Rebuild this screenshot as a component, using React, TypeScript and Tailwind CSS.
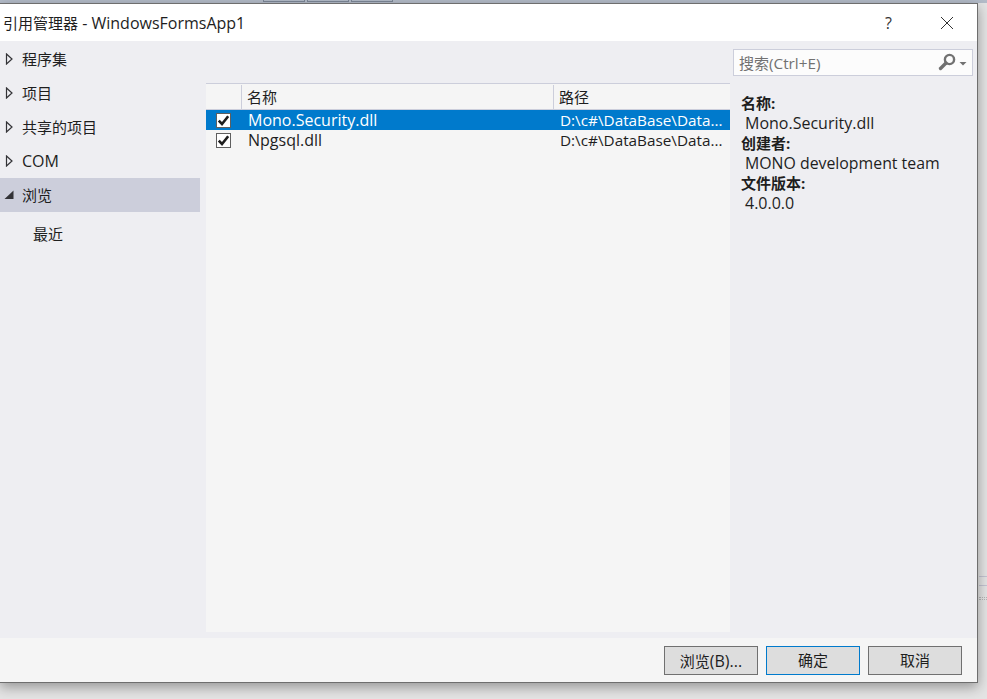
const F = "font-['Segoe_UI','Open_Sans','Noto_Sans','Noto_Sans_CJK_SC',sans-serif]";

function Tri({ open }: { open?: boolean }) {
  return open ? (
    <svg width="10" height="10" viewBox="0 0 10 10" className="shrink-0">
      <path d="M0.5 9 L9.5 9 L9.5 0.5 Z" fill="#333337" />
    </svg>
  ) : (
    <svg width="10" height="12" viewBox="0 0 10 12" className="shrink-0">
      <path d="M2.5 1 L8 6 L2.5 11 Z" fill="#eeeef2" stroke="#333337" strokeWidth="1.2" />
    </svg>
  );
}

function NavItem({ label, open }: { label: string; open?: boolean }) {
  return (
    <div className={`h-[34px] w-[200px] flex items-center pl-[4px] gap-[8px] text-[15px] text-[#1e1e1e] ${open ? "bg-[#cccedb]" : ""}`}>
      <Tri open={open} />
      <span>{label}</span>
    </div>
  );
}

function Check() {
  return (
    <span className="w-[15px] h-[15px] border border-[#5f5f5f] bg-white flex items-center justify-center shrink-0">
      <svg width="13" height="13" viewBox="0 0 13 13">
        <path d="M1.8 6.6 L5 10 L11.2 2.2" fill="none" stroke="#1e1e1e" strokeWidth="2.6" />
      </svg>
    </span>
  );
}

function Row({ name, selected }: { name: string; selected?: boolean }) {
  return (
    <div className={`h-[20px] flex items-center ${selected ? "bg-[#007acc] text-white" : "text-[#1e1e1e]"}`}>
      <div className="w-[35px] flex justify-end pr-[10px] shrink-0"><Check /></div>
      <div className="w-[313px] pl-[7px] shrink-0 text-[16px]">{name}</div>
      <div className="pl-[6px] whitespace-nowrap text-[15.3px]">D:\c#\DataBase\Data...</div>
    </div>
  );
}

function Btn({ label, latin, primary }: { label: string; latin?: string; primary?: boolean }) {
  return (
    <button className={`w-[94px] h-[29px] bg-[#dddddd] border text-[15px] text-[#1e1e1e] ${primary ? "border-[#007acc]" : "border-[#707070]"}`}>
      {label}
      {latin && <span className="text-[16px]">{latin}</span>}
    </button>
  );
}

export default function App() {
  return (
    <div className={`${F} w-[987px] h-[699px] bg-[#e4e4e4] overflow-hidden relative`}>
      <div className="absolute left-[979px] right-0 top-[576px] h-[1px] bg-[#c3c4d2]" />
      <div className="absolute left-[979px] right-0 top-[585px] h-[1px] bg-[#c3c4d2]" />
      <div className="absolute left-[979px] right-0 top-[597px] h-[3px] border-y border-dotted border-[#b5b5b5]" />
      <div className="h-[3px] bg-[#b4bcc9] flex gap-[2px] pl-[263px] shrink-0">
        <div className="w-[42px] h-[2px] border-b border-x border-[#7d8798]" />
        <div className="w-[42px] h-[2px] border-b border-x border-[#7d8798]" />
        <div className="w-[42px] h-[2px] border-b border-x border-[#7d8798]" />
      </div>
      <div className="relative w-[978px] h-[680px] border border-[#6e6e6e] border-l-0 bg-[#eeeef2] flex flex-col shadow-[0_4px_12px_rgba(0,0,0,0.35)]">
        <div className="h-[37px] bg-white flex items-center shrink-0">
          <span className="pl-[3px] text-[15px] text-[#1e1e1e] flex-1">
            引用管理器<span className="text-[16px]"> - WindowsFormsApp1</span>
          </span>
          <span className="text-[16px] text-[#333] mr-[48px]">?</span>
          <svg width="14" height="14" viewBox="0 0 14 14" className="mr-[23px]">
            <path d="M1 1 L13 13 M13 1 L1 13" stroke="#333" strokeWidth="1" />
          </svg>
        </div>
        <div className="flex-1 flex min-h-0">
          <div className="w-[206px] shrink-0 pt-[1px]">
            <NavItem label="程序集" />
            <NavItem label="项目" />
            <NavItem label="共享的项目" />
            <div className="h-[34px] w-[200px] flex items-center pl-[4px] gap-[8px] text-[16px] text-[#1e1e1e]">
              <Tri />
              <span>COM</span>
            </div>
            <NavItem label="浏览" open />
            <div className="pl-[33px] h-[44px] flex items-center text-[15px] text-[#1e1e1e]">最近</div>
          </div>
          <div className="w-[524px] shrink-0 pt-[42px] pb-[7px]">
            <div className="h-full bg-[#f5f5f5] flex flex-col">
              <div className="h-[27px] pt-[1px] flex text-[15px] text-[#1e1e1e] border-t border-b border-[#cccedb]">
                <div className="w-[36px] border-r border-[#cccedb]" />
                <div className="w-[312px] pl-[5px] border-r border-[#cccedb] flex items-center">名称</div>
                <div className="pl-[5px] flex items-center">路径</div>
              </div>
              <Row name="Mono.Security.dll" selected />
              <Row name="Npgsql.dll" />
            </div>
          </div>
          <div className="flex-1 pl-[3px] pr-[4px]">
            <div className="mt-[8px] h-[27px] w-[240px] bg-[#fcfcfc] border border-[#cccedb] flex items-center pl-[5px] text-[15px] text-[#717171]">
              <span className="flex-1 pt-[2px]">搜索<span className="text-[15.3px]">(Ctrl+E)</span></span>
              <svg width="20" height="20" viewBox="0 0 20 20" className="mb-[2px]">
                <circle cx="12.5" cy="7.5" r="4.6" fill="none" stroke="#717171" strokeWidth="2.4" />
                <path d="M9 11 L3.5 16.5" stroke="#717171" strokeWidth="3.4" strokeLinecap="round" />
              </svg>
              <svg width="12" height="18" viewBox="0 0 12 18" className="mr-[3px]">
                <path d="M2.5 8 L9.5 8 L6 11.5 Z" fill="#717171" />
              </svg>
            </div>
            <div className="mt-[17px] pl-[8px] text-[16px] leading-[20px] text-[#1e1e1e]">
              <div className="font-bold text-[15px]">名称:</div>
              <div className="pl-[4px]">Mono.Security.dll</div>
              <div className="font-bold text-[15px]">创建者:</div>
              <div className="pl-[4px] text-[15.85px]">MONO development team</div>
              <div className="font-bold text-[15px]">文件版本:</div>
              <div className="pl-[4px]">4.0.0.0</div>
            </div>
          </div>
        </div>
        <div className="h-[44px] bg-[#f5f5f5] shrink-0 flex justify-end items-start gap-[8px] pt-[8px] pr-[15px] -mt-[1px]">
          <Btn label="浏览" latin="(B)..." />
          <Btn label="确定" primary />
          <Btn label="取消" />
        </div>
      </div>
    </div>
  );
}
